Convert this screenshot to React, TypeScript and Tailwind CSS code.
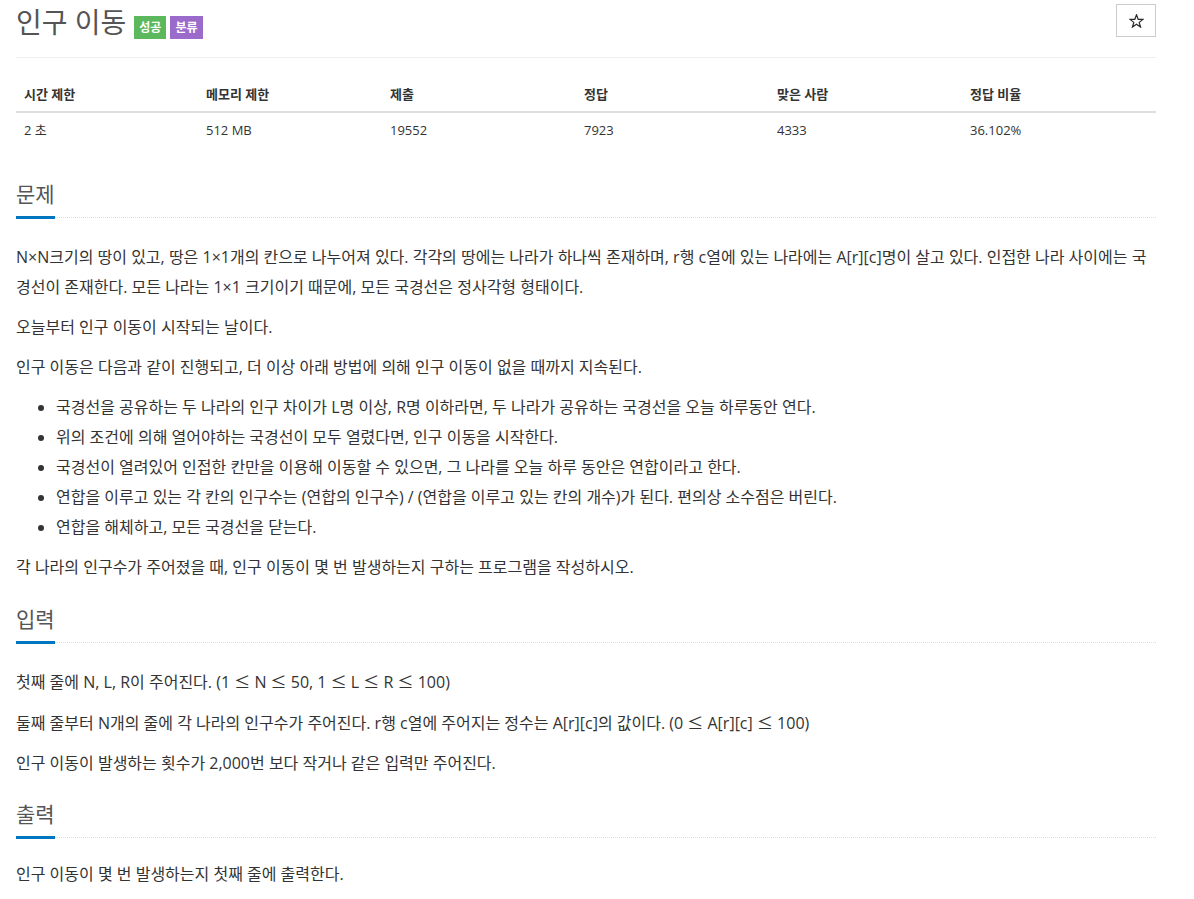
import React from 'react';

const font = { fontFamily: '"Open Sans", "Noto Sans CJK KR", sans-serif' };

const stats = [
	{ label: '시간 제한', value: '2 초', w: 'w-[182px]' },
	{ label: '메모리 제한', value: '512 MB', w: 'w-[184px]' },
	{ label: '제출', value: '19552', w: 'w-[194px]' },
	{ label: '정답', value: '7923', w: 'w-[193px]' },
	{ label: '맞은 사람', value: '4333', w: 'w-[193px]' },
	{ label: '정답 비율', value: '36.102%', w: 'w-[194px]' },
];

const Headline: React.FC<{ title: string; className?: string }> = ({ title, className = '' }) => (
	<div className={`flex border-b border-dotted border-[#dddddd] ${className}`}>
		<h2 className="-mb-[2px] border-b-[3px] border-[#0076c0] pb-[10px] text-[21px] leading-[24px] text-[#555555] font-normal">
			{title}
		</h2>
	</div>
);

// 수식 기호는 CJK 폰트의 넓은 글리프 사용
const Le = () => <span style={{ fontFamily: '"Noto Sans CJK KR", sans-serif' }}>≤</span>;

export default function App() {
	return (
		<div className="min-h-screen bg-white text-[#333333]" style={font}>
			<div className="ml-4 w-[1140px]">
				{/* 제목 */}
				<div className="flex h-[58px] items-start border-b border-[#eeeeee]">
					<h1 className="mt-[6px] text-[28px] leading-[32px] font-normal text-[#555555]">인구 이동</h1>
					<span className="ml-2 mt-[16px] flex h-[23px] items-center bg-[#5cb85c] px-[5px] text-[12px] font-bold text-white">
						성공
					</span>
					<span className="ml-[4px] mt-[16px] flex h-[23px] items-center bg-[#9b6bcc] px-[5px] text-[12px] font-bold text-white">
						분류
					</span>
					<button className="ml-auto mt-[4px] flex h-[33px] w-10 items-center justify-center border border-[#cccccc] bg-white">
						<svg width="15" height="14" viewBox="0 0 15 14">
							<polygon
								points="7.5,0.8 9.2,5.3 14,5.4 10.2,8.4 11.6,13.1 7.5,10.3 3.4,13.1 4.8,8.4 1,5.4 5.8,5.3"
								fill="none"
								stroke="#2a2a2a"
								strokeWidth="1.2"
								strokeLinejoin="miter"
							/>
						</svg>
					</button>
				</div>

				{/* 통계 */}
				<table className="mt-[19px] w-full border-collapse text-[13px]">
					<thead>
						<tr className="border-b-2 border-[#dddddd]">
							{stats.map((s) => (
								<th key={s.label} className={`${s.w} px-2 py-2 text-left font-bold leading-[18px]`}>
									{s.label}
								</th>
							))}
						</tr>
					</thead>
					<tbody>
						<tr>
							{stats.map((s) => (
								<td key={s.label} className="px-2 py-2 leading-[19px]">
									{s.value}
								</td>
							))}
						</tr>
					</tbody>
				</table>

				{/* 문제 */}
				<Headline title="문제" className="mt-[34px]" />
				<div className="mt-[24px] text-[16px] leading-[30px]">
					<p className="mb-[10px]">
						N×N크기의 땅이 있고, 땅은 1×1개의 칸으로 나누어져 있다. 각각의 땅에는 나라가 하나씩 존재하며, r행 c열에 있는 나라에는 A[r][c]명이 살고 있다. 인접한 나라 사이에는 국경선이 존재한다. 모든 나라는 1×1 크기이기 때문에, 모든 국경선은 정사각형 형태이다.
					</p>
					<p className="mb-[10px]">오늘부터 인구 이동이 시작되는 날이다.</p>
					<p className="mb-[10px]">인구 이동은 다음과 같이 진행되고, 더 이상 아래 방법에 의해 인구 이동이 없을 때까지 지속된다.</p>
					<ul className="mb-[10px] list-disc pl-10">
						<li>국경선을 공유하는 두 나라의 인구 차이가 L명 이상, R명 이하라면, 두 나라가 공유하는 국경선을 오늘 하루동안 연다.</li>
						<li>위의 조건에 의해 열어야하는 국경선이 모두 열렸다면, 인구 이동을 시작한다.</li>
						<li>국경선이 열려있어 인접한 칸만을 이용해 이동할 수 있으면, 그 나라를 오늘 하루 동안은 연합이라고 한다.</li>
						<li>연합을 이루고 있는 각 칸의 인구수는 (연합의 인구수) / (연합을 이루고 있는 칸의 개수)가 된다. 편의상 소수점은 버린다.</li>
						<li>연합을 해체하고, 모든 국경선을 닫는다.</li>
					</ul>
					<p className="mb-[10px]">각 나라의 인구수가 주어졌을 때, 인구 이동이 몇 번 발생하는지 구하는 프로그램을 작성하시오.</p>
				</div>

				{/* 입력 */}
				<Headline title="입력" className="mt-[25px]" />
				<div className="mt-[23px] text-[16px] leading-[30px]">
					<p className="mb-[10px]">
						첫째 줄에 N, L, R이 주어진다. (1 <Le /> N <Le /> 50, 1 <Le /> L <Le /> R <Le /> 100)
					</p>
					<p className="mb-[10px]">
						둘째 줄부터 N개의 줄에 각 나라의 인구수가 주어진다. r행 c열에 주어지는 정수는 A[r][c]의 값이다. (0 <Le /> A[r][c] <Le /> 100)
					</p>
					<p className="mb-[10px]">인구 이동이 발생하는 횟수가 2,000번 보다 작거나 같은 입력만 주어진다.</p>
				</div>

				{/* 출력 */}
				<Headline title="출력" className="mt-[24px]" />
				<div className="mt-[21px] text-[16px] leading-[30px]">
					<p className="mb-[10px]">인구 이동이 몇 번 발생하는지 첫째 줄에 출력한다.</p>
				</div>
			</div>
		</div>
	);
}
